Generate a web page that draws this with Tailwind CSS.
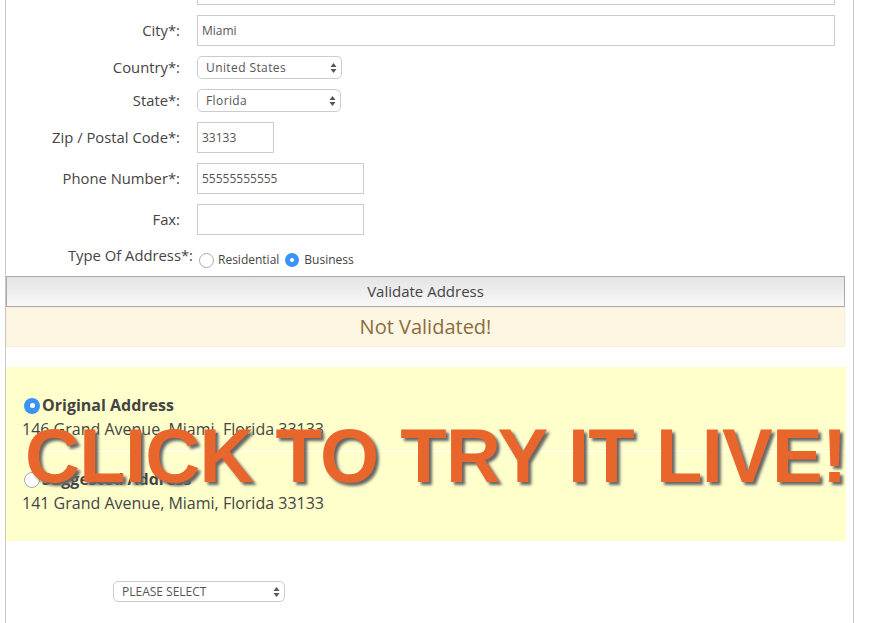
<!DOCTYPE html>
<html lang="en">
<head>
    <meta charset="UTF-8">
    <title>Address form</title>
    <script src="https://cdn.jsdelivr.net/npm/@tailwindcss/browser@4"></script>
</head>
<body class="bg-white">
<div class="relative h-[623px] w-[873px] overflow-hidden font-['Open_Sans',sans-serif] text-[#444]">
    <!-- Form box -->
    <div class="ml-[5px] h-[680px] w-[849px] -mt-[26px] border-x border-[#c8c8c8]">
        <div class="w-[839px]">
            <div class="flex h-[31px] items-center">
                <div class="w-[174px]"></div>
                <input class="ml-[17px] h-[31px] w-[638px] border border-[#ccc] bg-white px-1 text-xs">
            </div>
            <div class="mt-[10px] flex h-[31px] items-center">
                <label class="w-[174px] text-right text-[14.8px]">City*:</label>
                <input value="Miami" class="ml-[17px] h-[31px] w-[638px] border border-[#ccc] bg-white px-1 text-xs text-[#555]">
            </div>
            <div class="mt-[10px] flex h-[23px] items-center">
                <label class="w-[174px] text-right text-[14.8px]">Country*:</label>
                <div class="relative ml-[17px] flex h-[23px] w-[145px] items-center rounded-[5px] border border-[#ccc] pl-[8px] text-xs tracking-[0.4px] text-[#555]">
                    United States
                    <svg class="absolute right-[4px] top-[5px]" width="7" height="12" viewBox="0 0 7 12"><path d="M3.5 1 6.5 5H.5ZM3.5 11 .5 7h6Z" fill="#555"/></svg>
                </div>
            </div>
            <div class="mt-[10px] flex h-[23px] items-center">
                <label class="w-[174px] text-right text-[14.8px]">State*:</label>
                <div class="relative ml-[17px] flex h-[23px] w-[144px] items-center rounded-[5px] border border-[#ccc] pl-[8px] text-xs tracking-[0.4px] text-[#555]">
                    Florida
                    <svg class="absolute right-[4px] top-[5px]" width="7" height="12" viewBox="0 0 7 12"><path d="M3.5 1 6.5 5H.5ZM3.5 11 .5 7h6Z" fill="#555"/></svg>
                </div>
            </div>
            <div class="mt-[10px] flex h-[31px] items-center">
                <label class="w-[174px] text-right text-[14.8px]">Zip / Postal Code*:</label>
                <input value="33133" class="ml-[17px] h-[31px] w-[77px] border border-[#ccc] bg-white px-1 text-xs text-[#555]">
            </div>
            <div class="mt-[10px] flex h-[31px] items-center">
                <label class="w-[174px] text-right text-[14.8px]">Phone Number*:</label>
                <input value="55555555555" class="ml-[17px] h-[31px] w-[167px] border border-[#ccc] bg-white px-1 text-xs text-[#555]">
            </div>
            <div class="mt-[10px] flex h-[31px] items-center">
                <label class="w-[174px] text-right text-[14.8px]">Fax:</label>
                <input class="ml-[17px] h-[31px] w-[167px] border border-[#ccc] bg-white px-1 text-xs text-[#555]">
            </div>
            <div class="mt-[8px] flex h-[28px] items-start">
                <label class="w-[187px] pt-[1px] text-right text-[14.8px]">Type Of Address*:</label>
                <div class="ml-[6px] flex items-center pt-[9px] text-xs">
                    <span class="h-[15px] w-[15px] rounded-full border border-[#aaa] bg-white"></span>
                    <span class="ml-[4px]">Residential</span>
                    <span class="ml-[6px] flex h-[14px] w-[14px] items-center justify-center rounded-full bg-[#3b94f5]"><span class="h-[4px] w-[4px] rounded-full bg-white"></span></span>
                    <span class="ml-[5px]">Business</span>
                </div>
            </div>
        </div>

        <div class="mt-[5px] flex h-[31px] w-[839px] items-center justify-center border border-[#aaa] bg-linear-to-b from-[#e4e4e4] to-[#f8f8f8] text-[15px]">Validate Address</div>
        <div class="flex h-[40px] w-[839px] items-center justify-center border border-[#fbeed5] bg-[#fcf6e3] text-[20px] text-[#8a6d3b]">Not Validated!</div>

        <!-- Address choices -->
        <div class="mt-[20px] h-[174px] w-[840px] bg-[#ffffcc] pl-[16px] pt-[28px]">
            <div class="flex h-[21px] items-center">
                <span class="ml-[2px] flex h-[16px] w-[16px] items-center justify-center rounded-full bg-[#3b94f5]"><span class="h-[5px] w-[5px] rounded-full bg-white"></span></span>
                <span class="mb-[2px] ml-[2px] text-base font-bold">Original Address</span>
            </div>
            <div class="mt-[1px] text-base leading-[24px]">146 Grand Avenue, Miami, Florida 33133</div>
            <div class="mt-[10px] h-px w-[824px] bg-white"></div>
            <div class="mt-[17px] flex h-[21px] items-center">
                <span class="ml-[2px] h-[16px] w-[16px] rounded-full border border-[#aaa] bg-white"></span>
                <span class="mb-[2px] ml-[2px] text-base font-bold">Suggested Address</span>
            </div>
            <div class="mt-[1px] text-base leading-[24px]">141 Grand Avenue, Miami, Florida 33133</div>
        </div>

        <div class="relative ml-[107px] mt-[40px] flex h-[21px] w-[172px] items-center rounded-[5px] border border-[#ccc] pl-[8px] text-xs text-[#555]">
            PLEASE SELECT
            <svg class="absolute right-[4px] top-[4px]" width="7" height="12" viewBox="0 0 7 12"><path d="M3.5 1 6.5 5H.5ZM3.5 11 .5 7h6Z" fill="#555"/></svg>
        </div>
    </div>

    <!-- Promo text over the form -->
    <div class="absolute left-[25px] top-[412px] whitespace-nowrap font-['Liberation_Sans',sans-serif] text-[76px] font-bold leading-[88px] tracking-[-0.7px] [word-spacing:1.5px] text-[#e8652b] [text-shadow:3px_3px_3px_#666]">CLICK TO TRY IT LIVE!</div>
</div>
</body>
</html>
